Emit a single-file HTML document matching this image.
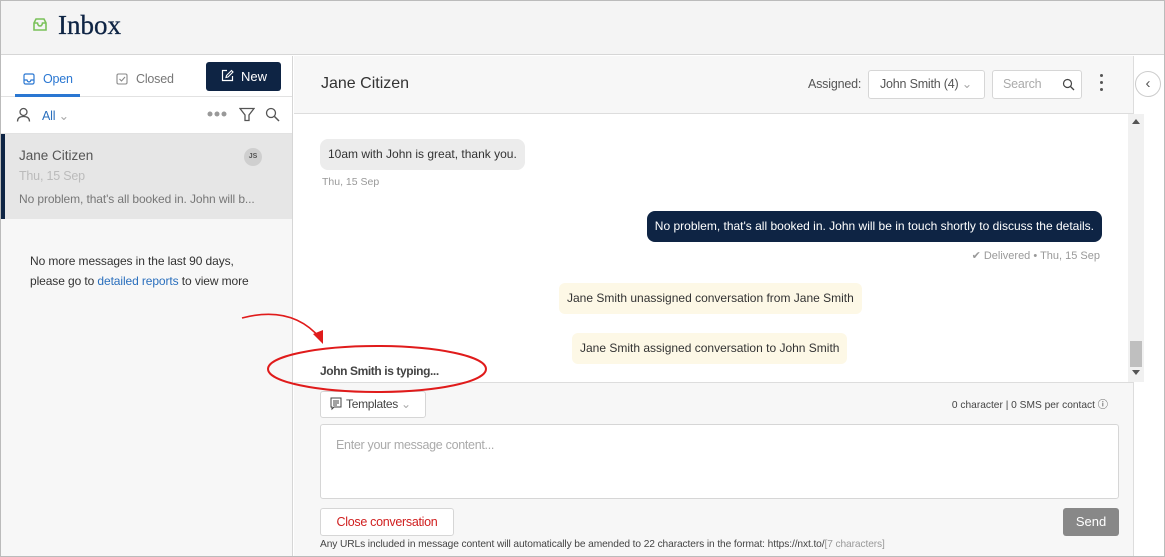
<!DOCTYPE html>
<html><head><meta charset="utf-8"><style>
*{box-sizing:border-box;margin:0;padding:0}
body{width:1165px;height:557px;overflow:hidden;font-family:"Liberation Sans",sans-serif;background:#fff;position:relative;color:#333}
.abs{position:absolute;white-space:nowrap}
.frame{left:0;top:0;width:1165px;height:557px;border:1px solid #bbb}
.hdr{left:1px;top:1px;width:1163px;height:54px;background:#f4f4f4;border-bottom:1px solid #d6d6d6}
.title{left:58px;top:10px;font-family:"Liberation Serif",serif;font-size:27px;color:#0e2444;-webkit-text-stroke:0.3px #0e2444}
.left{left:1px;top:56px;width:292px;height:500px;background:#f7f7f7;border-right:1px solid #d6d6d6}
.tabs{left:1px;top:56px;width:291px;height:41px;background:#fff;border-bottom:1px solid #e2e2e2}
.filt{left:1px;top:97px;width:291px;height:37px;background:#fff;border-bottom:1px solid #e2e2e2}
.item{left:1px;top:134px;width:291px;height:85px;background:#e6e6e6}
.t13{font-size:12.5px;letter-spacing:-0.2px}
.chhdr{left:294px;top:56px;width:839px;height:58px;background:#f7f7f7;border-bottom:1px solid #ddd}
.box{border:1px solid #d6d6d6;border-radius:3px;background:#fff}
.comp{left:294px;top:382px;width:839px;height:174px;background:#f7f7f7;border-top:1px solid #ddd}
.bubble{font-size:12px;padding:0 8px;line-height:31px;border-radius:8px}
.sys{background:#fdf8e6;font-size:12px;line-height:31px;padding:0 8px;border-radius:6px}
.strip{left:1133px;top:56px;width:31px;height:500px;background:#fff;border-left:1px solid #ddd}
</style></head><body>
<div class="abs hdr"></div>
<svg class="abs" style="left:32px;top:17px" width="16" height="16" viewBox="0 0 16 16"><path d="M2 6 L4 2 H12 L14 6 V13 H2 Z M2 6 H5.5 Q6 9 8 9 Q10 9 10.5 6 H14" fill="none" stroke="#7ac15a" stroke-width="1.6"/></svg>
<div class="abs title">Inbox</div>
<div class="abs left"></div>
<div class="abs tabs"></div>
<svg class="abs" style="left:23px;top:73px" width="12" height="12" viewBox="0 0 12 12"><rect x="1" y="1" width="10" height="10" rx="1.5" fill="none" stroke="#2a77d2" stroke-width="1.2"/><path d="M1 7H4Q4.5 9 6 9Q7.5 9 8 7H11" fill="none" stroke="#2a77d2" stroke-width="1.2"/></svg>
<div class="abs t13" style="left:43px;top:72px;color:#2a77d2">Open</div>
<div class="abs" style="left:15px;top:94px;width:65px;height:3px;background:#2a77d2"></div>
<svg class="abs" style="left:116px;top:73px" width="12" height="12" viewBox="0 0 12 12"><rect x="1" y="1" width="10" height="10" rx="1.5" fill="none" stroke="#888" stroke-width="1.1"/><path d="M3.5 6L5.5 8L9 4" fill="none" stroke="#888" stroke-width="1.1"/></svg>
<div class="abs t13" style="left:136px;top:72px;color:#777">Closed</div>
<div class="abs" style="left:206px;top:62px;width:75px;height:29px;background:#0e2444;border-radius:3px;color:#fff;font-size:13px;line-height:29px;padding-left:35px">New</div>
<svg class="abs" style="left:221px;top:69px" width="13" height="13" viewBox="0 0 13 13"><path d="M6 1.5H1.5V11.5H11.5V7" fill="none" stroke="#fff" stroke-width="1.2"/><path d="M5 8.5L5.5 6.5L10.5 1.5L12 3L7 8Z" fill="none" stroke="#fff" stroke-width="1.1"/></svg>
<div class="abs filt"></div>
<svg class="abs" style="left:16px;top:107px" width="15" height="15" viewBox="0 0 15 15"><circle cx="7.5" cy="5" r="3.5" fill="none" stroke="#555" stroke-width="1.3"/><path d="M1.5 14.5Q1.5 9.5 7.5 9.5Q13.5 9.5 13.5 14.5" fill="none" stroke="#555" stroke-width="1.3"/></svg>
<div class="abs t13" style="left:42px;top:108px;color:#2a6fbd">All <span style="color:#aaa">&#8964;</span></div>
<svg class="abs" style="left:207px;top:111px" width="20" height="6"><circle cx="3" cy="3" r="2.5" fill="#999"/><circle cx="10" cy="3" r="2.5" fill="#999"/><circle cx="17" cy="3" r="2.5" fill="#999"/></svg>
<svg class="abs" style="left:239px;top:107px" width="16" height="15" viewBox="0 0 16 15"><path d="M1 1.5H15L10 8V13.5H6V8Z" fill="none" stroke="#555" stroke-width="1.3"/></svg>
<svg class="abs" style="left:265px;top:107px" width="15" height="15" viewBox="0 0 15 15"><circle cx="6" cy="6" r="4.5" fill="none" stroke="#555" stroke-width="1.3"/><path d="M9.5 9.5L14 14" stroke="#555" stroke-width="1.5"/></svg>
<div class="abs item"></div>
<div class="abs" style="left:1px;top:134px;width:4px;height:85px;background:#0e2444"></div>
<div class="abs" style="left:19px;top:148px;font-size:13.5px;color:#555">Jane Citizen</div>
<div class="abs" style="left:244px;top:148px;width:18px;height:18px;border-radius:50%;background:#cfcfcf;font-size:7px;line-height:18px;text-align:center;color:#555;font-weight:bold">JS</div>
<div class="abs t13" style="left:19px;top:169px;color:#bbb">Thu, 15 Sep</div>
<div class="abs" style="left:19px;top:192px;color:#777;font-size:12px;letter-spacing:-0.1px">No problem, that's all booked in. John will b...</div>
<div class="abs" style="left:30px;top:251px;line-height:20px;color:#333;font-size:12px;letter-spacing:-0.1px">No more messages in the last 90 days,<br>please go to <span style="color:#2a6fbd">detailed reports</span> to view more</div>

<div class="abs chhdr"></div>
<div class="abs" style="left:321px;top:75px;font-size:16px;color:#333">Jane Citizen</div>
<div class="abs t13" style="left:808px;top:77px;color:#555">Assigned:</div>
<div class="abs box t13" style="left:868px;top:70px;width:117px;height:29px;line-height:27px;padding-left:11px;color:#555">John Smith (4) <span style="color:#aaa">&#8964;</span></div>
<div class="abs box t13" style="left:992px;top:70px;width:90px;height:29px;line-height:27px;padding-left:10px;color:#aaa">Search</div>
<svg class="abs" style="left:1062px;top:78px" width="13" height="13" viewBox="0 0 13 13"><circle cx="5.5" cy="5.5" r="4" fill="none" stroke="#444" stroke-width="1.2"/><path d="M8.5 8.5L12 12" stroke="#444" stroke-width="1.3"/></svg>
<div class="abs" style="left:1100px;top:74px;width:4px;line-height:0">
<div style="width:3px;height:3px;background:#555;border-radius:50%;margin-bottom:4px"></div><div style="width:3px;height:3px;background:#555;border-radius:50%;margin-bottom:4px"></div><div style="width:3px;height:3px;background:#555;border-radius:50%"></div></div>
<div class="abs strip"></div>
<div class="abs" style="left:1135px;top:71px;width:26px;height:26px;border-radius:50%;border:1px solid #ccc;background:#fff;text-align:center;line-height:24px;color:#555;font-size:15px">&#8249;</div>

<div class="abs" style="left:1128px;top:114px;width:16px;height:268px;background:#f1f1f1"></div>
<div class="abs" style="left:1132px;top:119px;border:4px solid transparent;border-bottom:5px solid #555;border-top:0"></div>
<div class="abs" style="left:1132px;top:370px;border:4px solid transparent;border-top:5px solid #555;border-bottom:0"></div>
<div class="abs" style="left:1130px;top:341px;width:12px;height:26px;background:#bfbfbf"></div>

<div class="abs bubble" style="left:320px;top:139px;background:#ececec;color:#333">10am with John is great, thank you.</div>
<div class="abs" style="left:322px;top:176px;font-size:10.5px;color:#999">Thu, 15 Sep</div>
<div class="abs bubble" style="right:63px;top:211px;background:#0e2444;color:#fff">No problem, that's all booked in. John will be in touch shortly to discuss the details.</div>
<div class="abs" style="right:65px;top:249px;font-size:11px;color:#999">✔ Delivered • Thu, 15 Sep</div>
<div class="abs sys" style="left:559px;top:283px;color:#333">Jane Smith unassigned conversation from Jane Smith</div>
<div class="abs sys" style="left:572px;top:333px;color:#333">Jane Smith assigned conversation to John Smith</div>
<div class="abs" style="left:320px;top:364px;font-size:12px;letter-spacing:-0.4px;font-weight:bold;color:#444">John Smith is typing...</div>

<div class="abs comp"></div>
<div class="abs box" style="left:320px;top:391px;width:106px;height:27px;line-height:25px;padding-left:25px;font-size:12px;letter-spacing:-0.3px;color:#444">Templates <span style="color:#aaa">&#8964;</span></div>
<svg class="abs" style="left:330px;top:397px" width="12" height="14" viewBox="0 0 12 14"><path d="M1 1H11V10H4L2 12V10H1Z" fill="none" stroke="#444" stroke-width="1"/><path d="M3 4H9M3 6H9M3 8H7" stroke="#444" stroke-width="1"/></svg>
<div class="abs" style="right:57px;top:396px;font-size:10.2px;color:#444">0 character | 0 SMS per contact ⓘ</div>
<div class="abs box" style="left:320px;top:424px;width:799px;height:75px;padding:13px 15px;font-size:12.5px;letter-spacing:-0.3px;color:#aaa">Enter your message content...</div>
<div class="abs box" style="left:320px;top:508px;width:134px;height:28px;line-height:26px;text-align:center;font-size:12.5px;letter-spacing:-0.3px;color:#d02020">Close conversation</div>
<div class="abs" style="left:1063px;top:508px;width:56px;height:28px;background:#888;border-radius:3px;color:#fff;line-height:28px;text-align:center;font-size:13px">Send</div>
<div class="abs" style="left:320px;top:539px;font-size:10.2px;letter-spacing:-0.1px;color:#444">Any URLs included in message content will automatically be amended to 22 characters in the format: https://nxt.to/<span style="color:#999">[7 characters]</span></div>
<svg class="abs" style="left:0;top:0" width="1165" height="557"><ellipse cx="377" cy="369" rx="109" ry="23" fill="none" stroke="#e01b1b" stroke-width="2"/><path d="M242 318Q292 305 320 338" fill="none" stroke="#e01b1b" stroke-width="1.6"/><path d="M313 334L323 344L323 330Z" fill="#e01b1b"/></svg>
<div class="abs frame"></div>
</body></html>
